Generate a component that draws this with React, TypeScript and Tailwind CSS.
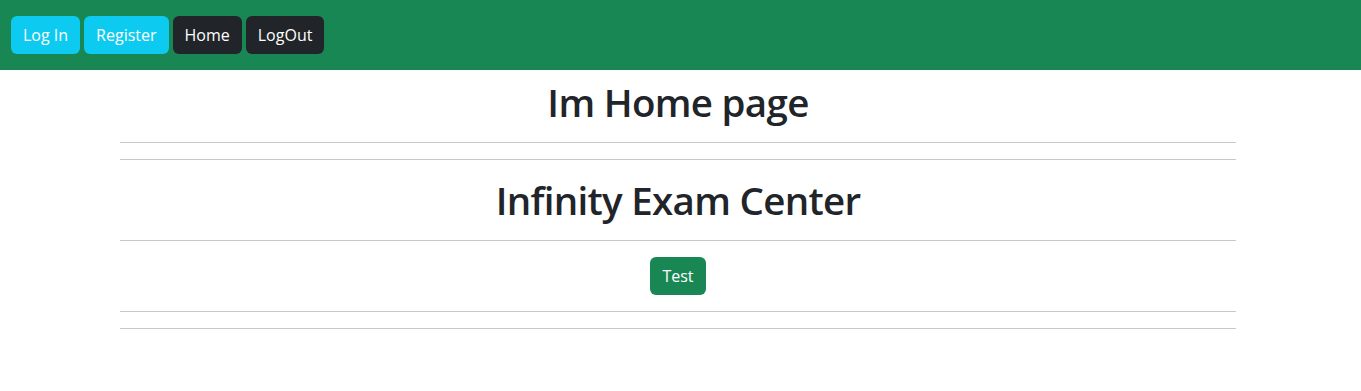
export default function App() {
  const btn = "h-[38px] px-3 rounded-[6px] text-[16px] leading-6 text-white";

  return (
    <div className="min-h-[391px] bg-white text-[#212529] font-['Open_Sans','Liberation_Sans',sans-serif]">
      <nav className="h-[70px] bg-[#198754] flex items-start gap-1 pl-[11px] pt-4">
        <button className={`${btn} bg-[#0dcaf0]`}>Log In</button>
        <button className={`${btn} bg-[#0dcaf0]`}>Register</button>
        <button className={`${btn} bg-[#212529]`}>Home</button>
        <button className={`${btn} bg-[#212529]`}>LogOut</button>
      </nav>

      <main className="w-[1116px] ml-[120px] flex flex-col">
        <h1 className="mt-2 h-12 text-[38.5px] leading-[48px] font-semibold tracking-[-0.7px] text-center">Im Home page</h1>
        <hr className="mt-4 border-[#c8c8c8]" />
        <hr className="mt-4 border-[#c8c8c8]" />
        <h1 className="mt-4 h-12 text-[38.5px] leading-[48px] font-semibold tracking-[-0.7px] text-center">Infinity Exam Center</h1>
        <hr className="mt-4 border-[#c8c8c8]" />
        <div className="mt-4 flex justify-center">
          <button className={`${btn} bg-[#198754]`}>Test</button>
        </div>
        <hr className="mt-4 border-[#c8c8c8]" />
        <hr className="mt-4 border-[#c8c8c8]" />
      </main>
    </div>
  );
}
